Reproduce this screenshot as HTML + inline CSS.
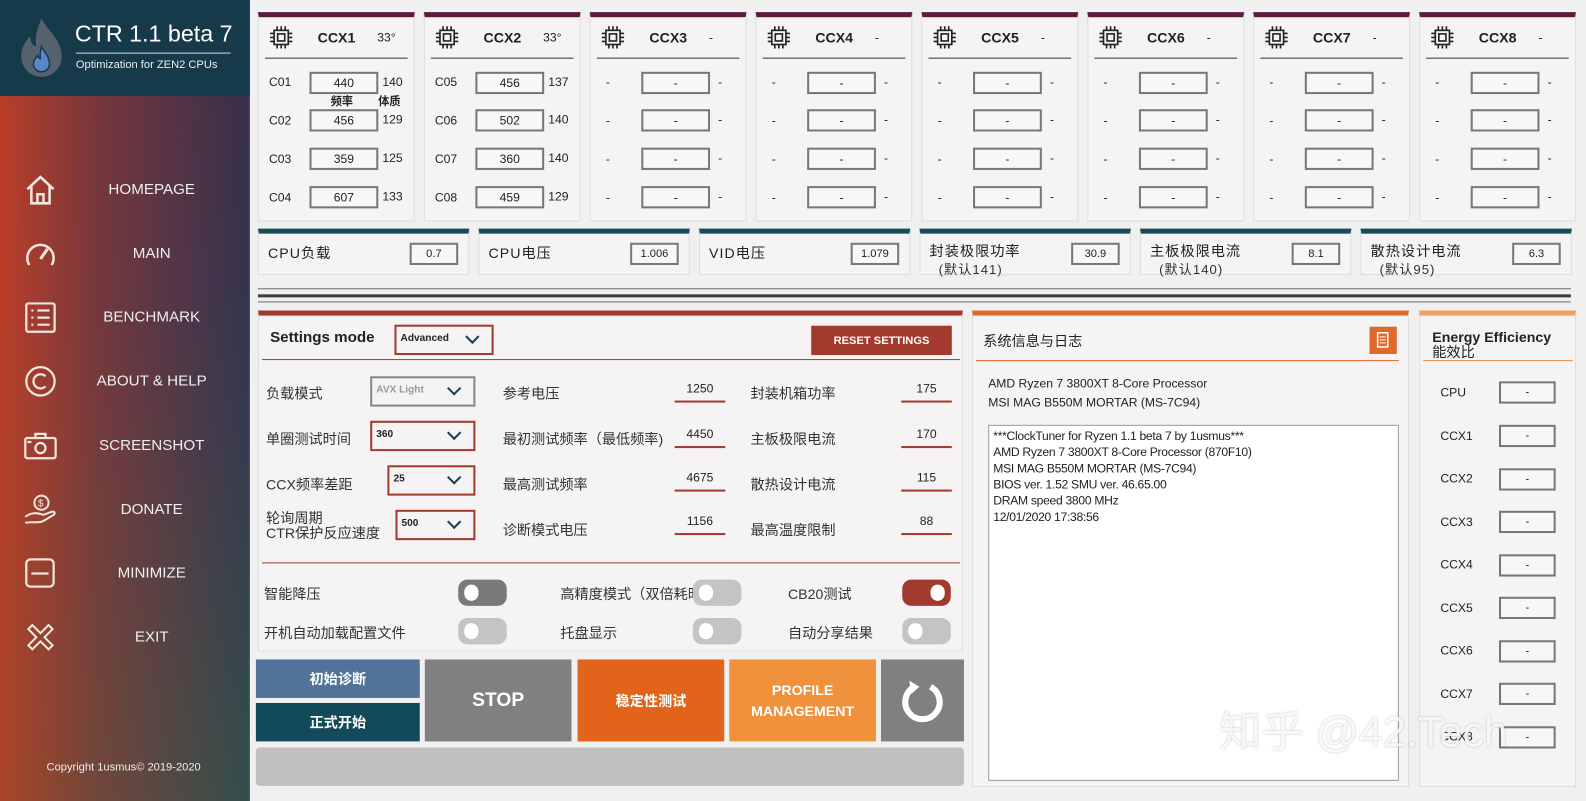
<!DOCTYPE html><html><head><meta charset="utf-8"><style>
*{box-sizing:border-box;margin:0;padding:0}
body{width:1586px;height:800px;position:relative;overflow:hidden;background:#f0f0f0;font-family:"Liberation Sans","Noto Sans CJK SC",sans-serif;color:#222}
#w{position:absolute;left:0;top:0;width:1568px;height:792px;transform:scale(1.01148);transform-origin:0 0}
.a{position:absolute}
#side{left:0;top:0;width:247px;height:792px;background:linear-gradient(90deg,rgba(186,62,40,1) 0%,rgba(150,58,52,.65) 40%,rgba(70,45,70,0) 100%),linear-gradient(180deg,#3a2c4a 0%,#2e3a52 60%,#1b4a58 100%);}
#side:after{content:"";position:absolute;left:0;top:0;right:0;bottom:0;background:linear-gradient(180deg,rgba(0,0,0,0) 40%,rgba(120,90,40,0.25) 100%)}
#hdr{left:0;top:0;width:247px;height:95px;background:#163a4a;z-index:2}
.nav{position:absolute;left:0;width:247px;height:40px;z-index:2;color:#eee;font-size:15px}
.nav span{position:absolute;left:100px;width:100px;text-align:center;top:12px}
.nav svg{position:absolute;left:23px;top:4px}
.p{position:absolute;background:#f5f3f4;border:1px solid #ddd}
.ccx{top:12px;width:155px;height:207px;border-top:5px solid #5b1a3e}
.ccx .t{position:absolute;left:58px;top:12px;font-weight:bold;font-size:14px}
.ccx .d{position:absolute;left:117px;top:13px;font-size:12px}
.ccx .hl{position:absolute;left:6px;right:6px;top:40px;border-top:1px solid #333}
.ccx .r{position:absolute;font-size:12px;width:20px;text-align:center}
.bx{position:absolute;border:2px solid #777;background:#f7f7f7;font-size:12px;text-align:center;line-height:18px;height:22px}
.ccx .bx{left:50px;width:68px}
.met{top:226px;width:209px;height:46px;border-top:5px solid #164e5a}
.met .l{position:absolute;left:9px;top:9px;font-size:14px;letter-spacing:1px}
.met .s{position:absolute;left:18px;top:25px;font-size:13px;color:#333;letter-spacing:1px}
.met .bx{right:10px;top:9px;width:48px;font-size:11px}
.lab{position:absolute;font-size:14px;color:#333}
.val{position:absolute;font-size:12px;width:50px;text-align:center;border-bottom:2px solid #a33a2e;height:21px}
.dd{position:absolute;border:2px solid #a33a2e;height:30px;font-size:10px;font-weight:bold;padding:6px 0 0 4px}
.dd:after{content:"";position:absolute;right:14px;top:5px;width:8px;height:8px;border-right:2px solid #183f50;border-bottom:2px solid #183f50;transform:rotate(45deg)}
.tg{position:absolute;width:48px;height:26px;border-radius:9px;background:#c4c4c4}
.tg:after{content:"";position:absolute;left:6px;top:5px;width:14px;height:16px;border-radius:7px;background:#fff}
.tg.on:after{left:28px}
.btn{position:absolute;color:#fff;font-weight:bold;text-align:center;display:flex;align-items:center;justify-content:center}
.ee{position:absolute;font-size:12px;left:20px}
.eb{position:absolute;left:78px;width:56px;height:22px;border:2px solid #777;background:#f7f7f7;font-size:11px;text-align:center;line-height:18px}
</style></head><body><div id="w">
<div id="side" class="a"></div>
<div id="hdr" class="a">
<svg class="a" style="left:16px;top:16px" width="50" height="62" viewBox="0 0 50 62"><path d="M25 2C30 14 45 22 45 40A20 20 0 0 1 5 40C5 30 10 24 14 20C14 28 18 30 20 30C18 20 22 10 25 2Z" fill="#56626e"/><path d="M25 30C28 36 33 40 33 47A8 8 0 0 1 17 47C17 43 20 41 21 39C22 42 24 42 24 42C23 38 24 34 25 30Z" fill="#5a86c7" stroke="#163a4a" stroke-width="1.5"/></svg>
<div class="a" style="left:74px;top:20px;font-size:23px;color:#fff">CTR 1.1 beta 7</div>
<div class="a" style="left:75px;top:52px;width:153px;border-top:1px solid #ddd"></div>
<div class="a" style="left:75px;top:58px;font-size:11px;color:#eee">Optimization for ZEN2 CPUs</div>
</div>
<div class="nav" style="top:167px"><svg width="34" height="34" viewBox="0 0 34 34" fill="none" stroke="#f3e6dc" stroke-width="2.5"><path d="M4 16L17 4L30 16M8 13V30H26V13M14 30V21H20V30"/></svg><span>HOMEPAGE</span></div>
<div class="nav" style="top:230px"><svg width="34" height="34" viewBox="0 0 34 34" fill="none" stroke="#f3e6dc" stroke-width="2.5"><path d="M6 28A13 13 0 1 1 28 28"/><path d="M17 22L24 12" stroke-width="3"/></svg><span>MAIN</span></div>
<div class="nav" style="top:293px"><svg width="34" height="34" viewBox="0 0 34 34" fill="none" stroke="#f3e6dc" stroke-width="2.2"><rect x="3" y="3" width="28" height="28" rx="2"/><path d="M8 10h2M14 10h12M8 17h2M14 17h12M8 24h2M14 24h12"/></svg><span>BENCHMARK</span></div>
<div class="nav" style="top:356px"><svg width="34" height="34" viewBox="0 0 34 34" fill="none" stroke="#f3e6dc" stroke-width="2.2"><circle cx="17" cy="17" r="14"/><path d="M22 12A7 7 0 1 0 22 22"/></svg><span style="left:90px;width:120px">ABOUT &amp; HELP</span></div>
<div class="nav" style="top:420px"><svg width="34" height="34" viewBox="0 0 34 34" fill="none" stroke="#f3e6dc" stroke-width="2.2"><rect x="2" y="9" width="30" height="20" rx="2"/><path d="M12 9V5H22V9M4 13h4"/><circle cx="17" cy="19" r="5"/></svg><span style="left:90px;width:120px">SCREENSHOT</span></div>
<div class="nav" style="top:483px"><svg width="34" height="34" viewBox="0 0 34 34" fill="none" stroke="#f3e6dc" stroke-width="2"><circle cx="18" cy="10" r="7"/><text x="14.5" y="14" font-size="10" fill="#f3e6dc" stroke="none" font-family="Liberation Sans">$</text><path d="M2 24C8 19 14 20 20 22L28 19C31 18 32 21 30 22L20 28C14 31 8 28 2 30"/></svg><span>DONATE</span></div>
<div class="nav" style="top:546px"><svg width="34" height="34" viewBox="0 0 34 34" fill="none" stroke="#f3e6dc" stroke-width="2.2"><rect x="3" y="3" width="27" height="27" rx="4"/><path d="M8 17H25"/></svg><span>MINIMIZE</span></div>
<div class="nav" style="top:609px"><svg width="34" height="34" viewBox="0 0 34 34" fill="none" stroke="#f3e6dc" stroke-width="2"><path d="M5 9L9 5L17 13L25 5L29 9L21 17L29 25L25 29L17 21L9 29L5 25L13 17Z"/></svg><span>EXIT</span></div>
<div class="a" style="left:46px;top:753px;font-size:11px;color:#eee;z-index:2">Copyright 1usmus© 2019-2020</div>

<svg width="0" height="0" class="a"><defs><g id="chip" fill="none" stroke="#222" stroke-width="1.6"><rect x="6" y="5" width="14" height="14"/><rect x="9.5" y="8.5" width="7" height="7"/><path d="M9 1v4M13 1v4M17 1v4M9 19v4M13 19v4M17 19v4M2 8h4M2 12h4M2 16h4M20 8h4M20 12h4M20 16h4"/></g></defs></svg>

<div class="p ccx" style="left:255px"><svg class="a" style="left:9px;top:8px" width="26" height="24"><use href="#chip"/></svg><div class="t">CCX1</div><div class="d">33°</div><div class="hl"></div>
<div class="r" style="left:7px;top:57px;width:28px">C01</div><div class="bx" style="top:54px">440</div><div class="r" style="left:121px;top:57px;width:22px">140</div>
<div class="r" style="left:62px;top:75px;width:40px;font-weight:bold;font-size:11px">频率</div><div class="r" style="left:112px;top:75px;width:34px;font-weight:bold;font-size:11px">体质</div>
<div class="r" style="left:7px;top:95px;width:28px">C02</div><div class="bx" style="top:91px">456</div><div class="r" style="left:121px;top:94px;width:22px">129</div>
<div class="r" style="left:7px;top:133px;width:28px">C03</div><div class="bx" style="top:129px">359</div><div class="r" style="left:121px;top:132px;width:22px">125</div>
<div class="r" style="left:7px;top:171px;width:28px">C04</div><div class="bx" style="top:167px">607</div><div class="r" style="left:121px;top:170px;width:22px">133</div></div>

<div class="p ccx" style="left:419px"><svg class="a" style="left:9px;top:8px" width="26" height="24"><use href="#chip"/></svg><div class="t">CCX2</div><div class="d">33°</div><div class="hl"></div>
<div class="r" style="left:7px;top:57px;width:28px">C05</div><div class="bx" style="top:54px">456</div><div class="r" style="left:121px;top:57px;width:22px">137</div>
<div class="r" style="left:7px;top:95px;width:28px">C06</div><div class="bx" style="top:91px">502</div><div class="r" style="left:121px;top:94px;width:22px">140</div>
<div class="r" style="left:7px;top:133px;width:28px">C07</div><div class="bx" style="top:129px">360</div><div class="r" style="left:121px;top:132px;width:22px">140</div>
<div class="r" style="left:7px;top:171px;width:28px">C08</div><div class="bx" style="top:167px">459</div><div class="r" style="left:121px;top:170px;width:22px">129</div></div>

<div class="p ccx" style="left:583px"><svg class="a" style="left:9px;top:8px" width="26" height="24"><use href="#chip"/></svg><div class="t">CCX3</div><div class="d">-</div><div class="hl"></div>
<div class="r" style="left:7px;top:57px">-</div><div class="bx" style="top:54px">-</div><div class="r" style="left:118px;top:57px">-</div>
<div class="r" style="left:7px;top:95px">-</div><div class="bx" style="top:91px">-</div><div class="r" style="left:118px;top:94px">-</div>
<div class="r" style="left:7px;top:133px">-</div><div class="bx" style="top:129px">-</div><div class="r" style="left:118px;top:132px">-</div>
<div class="r" style="left:7px;top:171px">-</div><div class="bx" style="top:167px">-</div><div class="r" style="left:118px;top:170px">-</div></div>

<div class="p ccx" style="left:747px"><svg class="a" style="left:9px;top:8px" width="26" height="24"><use href="#chip"/></svg><div class="t">CCX4</div><div class="d">-</div><div class="hl"></div>
<div class="r" style="left:7px;top:57px">-</div><div class="bx" style="top:54px">-</div><div class="r" style="left:118px;top:57px">-</div>
<div class="r" style="left:7px;top:95px">-</div><div class="bx" style="top:91px">-</div><div class="r" style="left:118px;top:94px">-</div>
<div class="r" style="left:7px;top:133px">-</div><div class="bx" style="top:129px">-</div><div class="r" style="left:118px;top:132px">-</div>
<div class="r" style="left:7px;top:171px">-</div><div class="bx" style="top:167px">-</div><div class="r" style="left:118px;top:170px">-</div></div>

<div class="p ccx" style="left:911px"><svg class="a" style="left:9px;top:8px" width="26" height="24"><use href="#chip"/></svg><div class="t">CCX5</div><div class="d">-</div><div class="hl"></div>
<div class="r" style="left:7px;top:57px">-</div><div class="bx" style="top:54px">-</div><div class="r" style="left:118px;top:57px">-</div>
<div class="r" style="left:7px;top:95px">-</div><div class="bx" style="top:91px">-</div><div class="r" style="left:118px;top:94px">-</div>
<div class="r" style="left:7px;top:133px">-</div><div class="bx" style="top:129px">-</div><div class="r" style="left:118px;top:132px">-</div>
<div class="r" style="left:7px;top:171px">-</div><div class="bx" style="top:167px">-</div><div class="r" style="left:118px;top:170px">-</div></div>

<div class="p ccx" style="left:1075px"><svg class="a" style="left:9px;top:8px" width="26" height="24"><use href="#chip"/></svg><div class="t">CCX6</div><div class="d">-</div><div class="hl"></div>
<div class="r" style="left:7px;top:57px">-</div><div class="bx" style="top:54px">-</div><div class="r" style="left:118px;top:57px">-</div>
<div class="r" style="left:7px;top:95px">-</div><div class="bx" style="top:91px">-</div><div class="r" style="left:118px;top:94px">-</div>
<div class="r" style="left:7px;top:133px">-</div><div class="bx" style="top:129px">-</div><div class="r" style="left:118px;top:132px">-</div>
<div class="r" style="left:7px;top:171px">-</div><div class="bx" style="top:167px">-</div><div class="r" style="left:118px;top:170px">-</div></div>

<div class="p ccx" style="left:1239px"><svg class="a" style="left:9px;top:8px" width="26" height="24"><use href="#chip"/></svg><div class="t">CCX7</div><div class="d">-</div><div class="hl"></div>
<div class="r" style="left:7px;top:57px">-</div><div class="bx" style="top:54px">-</div><div class="r" style="left:118px;top:57px">-</div>
<div class="r" style="left:7px;top:95px">-</div><div class="bx" style="top:91px">-</div><div class="r" style="left:118px;top:94px">-</div>
<div class="r" style="left:7px;top:133px">-</div><div class="bx" style="top:129px">-</div><div class="r" style="left:118px;top:132px">-</div>
<div class="r" style="left:7px;top:171px">-</div><div class="bx" style="top:167px">-</div><div class="r" style="left:118px;top:170px">-</div></div>

<div class="p ccx" style="left:1403px"><svg class="a" style="left:9px;top:8px" width="26" height="24"><use href="#chip"/></svg><div class="t">CCX8</div><div class="d">-</div><div class="hl"></div>
<div class="r" style="left:7px;top:57px">-</div><div class="bx" style="top:54px">-</div><div class="r" style="left:118px;top:57px">-</div>
<div class="r" style="left:7px;top:95px">-</div><div class="bx" style="top:91px">-</div><div class="r" style="left:118px;top:94px">-</div>
<div class="r" style="left:7px;top:133px">-</div><div class="bx" style="top:129px">-</div><div class="r" style="left:118px;top:132px">-</div>
<div class="r" style="left:7px;top:171px">-</div><div class="bx" style="top:167px">-</div><div class="r" style="left:118px;top:170px">-</div></div>

<div class="p met" style="left:255px"><div class="l">CPU负载</div><div class="bx">0.7</div></div>
<div class="p met" style="left:473px"><div class="l">CPU电压</div><div class="bx">1.006</div></div>
<div class="p met" style="left:691px"><div class="l">VID电压</div><div class="bx">1.079</div></div>
<div class="p met" style="left:909px"><div class="l" style="top:7px">封装极限功率</div><div class="s">(默认141)</div><div class="bx">30.9</div></div>
<div class="p met" style="left:1127px"><div class="l" style="top:7px">主板极限电流</div><div class="s">(默认140)</div><div class="bx">8.1</div></div>
<div class="p met" style="left:1345px"><div class="l" style="top:7px">散热设计电流</div><div class="s">(默认95)</div><div class="bx">6.3</div></div>

<div class="a" style="left:255px;top:285px;width:1298px;border-top:1px solid #666"></div>
<div class="a" style="left:255px;top:291px;width:1298px;border-top:3px solid #3c3c3c"></div>
<div class="a" style="left:255px;top:298px;width:1298px;border-top:1px solid #666"></div>

<div class="p" style="left:255px;top:307px;width:697px;height:337px;border-top:5px solid #a33a2e">
<div class="a" style="left:11px;top:13px;font-size:15px;font-weight:bold">Settings mode</div>
<div class="dd" style="left:134px;top:9px;width:98px;height:30px">Advanced</div>
<div class="btn" style="left:546px;top:10px;width:139px;height:29px;background:#a33a2e;font-size:11px">RESET SETTINGS</div>
<div class="a" style="left:3px;top:43px;width:690px;border-top:1px solid #a33a2e"></div>
<div class="lab" style="left:7px;top:67px">负载模式</div><div class="dd" style="left:110px;top:60px;width:104px;border-color:#888;color:#999">AVX Light</div>
<div class="lab" style="left:7px;top:112px">单圈测试时间</div><div class="dd" style="left:110px;top:104px;width:104px">360</div>
<div class="lab" style="left:7px;top:157px">CCX频率差距</div><div class="dd" style="left:127px;top:148px;width:87px">25</div>
<div class="lab" style="left:7px;top:193px;line-height:15px">轮询周期<br>CTR保护反应速度</div><div class="dd" style="left:135px;top:192px;width:79px">500</div>
<div class="lab" style="left:241px;top:67px">参考电压</div><div class="val" style="left:411px;top:65px">1250</div>
<div class="lab" style="left:241px;top:112px">最初测试频率（最低频率)</div><div class="val" style="left:411px;top:110px">4450</div>
<div class="lab" style="left:241px;top:157px">最高测试频率</div><div class="val" style="left:411px;top:153px">4675</div>
<div class="lab" style="left:241px;top:202px">诊断模式电压</div><div class="val" style="left:411px;top:196px">1156</div>
<div class="lab" style="left:486px;top:67px">封装机箱功率</div><div class="val" style="left:635px;top:65px">175</div>
<div class="lab" style="left:486px;top:112px">主板极限电流</div><div class="val" style="left:635px;top:110px">170</div>
<div class="lab" style="left:486px;top:157px">散热设计电流</div><div class="val" style="left:635px;top:153px">115</div>
<div class="lab" style="left:486px;top:202px">最高温度限制</div><div class="val" style="left:635px;top:196px">88</div>
<div class="a" style="left:3px;top:244px;width:690px;border-top:1px solid #a33a2e"></div>
<div class="lab" style="left:5px;top:265px">智能降压</div><div class="tg" style="left:197px;top:261px;background:#7a7a7a"></div>
<div class="lab" style="left:298px;top:265px">高精度模式（双倍耗时)</div><div class="tg" style="left:429px;top:261px"></div>
<div class="lab" style="left:523px;top:265px">CB20测试</div><div class="tg on" style="left:636px;top:261px;background:#a33a2e"></div>
<div class="lab" style="left:5px;top:304px">开机自动加载配置文件</div><div class="tg" style="left:197px;top:299px"></div>
<div class="lab" style="left:298px;top:304px">托盘显示</div><div class="tg" style="left:429px;top:299px"></div>
<div class="lab" style="left:523px;top:304px">自动分享结果</div><div class="tg" style="left:636px;top:299px"></div>
</div>

<div class="p" style="left:961px;top:307px;width:432px;height:471px;border-top:5px solid #e06a2a">
<div class="a" style="left:10px;top:15px;font-size:14px">系统信息与日志</div>
<div class="a" style="left:392px;top:11px;width:27px;height:27px;background:#e06a2a"><svg width="27" height="27"><rect x="8" y="6" width="10" height="14" fill="none" stroke="#fff" stroke-width="1.5"/><path d="M10 10h6M10 13h6M10 16h6" stroke="#fff"/></svg></div>
<div class="a" style="left:3px;top:44px;width:418px;border-top:1px solid #e06a2a"></div>
<div class="a" style="left:15px;top:58px;font-size:12px;line-height:19px">AMD Ryzen 7 3800XT 8-Core Processor<br>MSI MAG B550M MORTAR (MS-7C94)</div>
<div class="a" style="left:15px;top:108px;width:406px;height:352px;border:1px solid #999;background:#fff;font-size:12px;line-height:16px;padding:2px 4px;letter-spacing:-0.3px">***ClockTuner for Ryzen 1.1 beta 7 by 1usmus***<br>AMD Ryzen 7 3800XT 8-Core Processor (870F10)<br>MSI MAG B550M MORTAR (MS-7C94)<br>BIOS ver. 1.52 SMU ver. 46.65.00<br>DRAM speed 3800 MHz<br>12/01/2020 17:38:56</div>
</div>

<div class="p" style="left:1403px;top:307px;width:155px;height:471px;border-top:5px solid #f0a060">
<div class="a" style="left:12px;top:14px;font-size:14px;font-weight:bold;line-height:15px">Energy Efficiency<br><span style="font-weight:normal">能效比</span></div>
<div class="a" style="left:3px;top:44px;width:148px;border-top:1px solid #e09050"></div>
<div class="ee" style="top:69px">CPU</div><div class="eb" style="top:65px">-</div>
<div class="ee" style="top:112px">CCX1</div><div class="eb" style="top:108px">-</div>
<div class="ee" style="top:154px">CCX2</div><div class="eb" style="top:151px">-</div>
<div class="ee" style="top:197px">CCX3</div><div class="eb" style="top:193px">-</div>
<div class="ee" style="top:239px">CCX4</div><div class="eb" style="top:236px">-</div>
<div class="ee" style="top:282px">CCX5</div><div class="eb" style="top:278px">-</div>
<div class="ee" style="top:324px">CCX6</div><div class="eb" style="top:321px">-</div>
<div class="ee" style="top:367px">CCX7</div><div class="eb" style="top:363px">-</div>
<div class="ee" style="top:409px">CCX8</div><div class="eb" style="top:406px">-</div>
</div>

<div class="btn" style="left:253px;top:652px;width:162px;height:38px;background:#52729a;font-size:14px">初始诊断</div>
<div class="btn" style="left:253px;top:695px;width:162px;height:38px;background:#134a5a;font-size:14px">正式开始</div>
<div class="btn" style="left:420px;top:652px;width:145px;height:81px;background:#808080;font-size:19px">STOP</div>
<div class="btn" style="left:571px;top:652px;width:145px;height:81px;background:#e2641a;font-size:14px">稳定性测试</div>
<div class="btn" style="left:721px;top:652px;width:145px;height:81px;background:#f0913c;font-size:14px;line-height:21px">PROFILE<br>MANAGEMENT</div>
<div class="btn" style="left:871px;top:652px;width:82px;height:81px;background:#808080"><svg width="44" height="44" viewBox="0 0 44 44" fill="none" stroke="#fff" stroke-width="6"><path d="M14 8A17 17 0 1 0 30 8"/><path d="M9 2L19 8L11 15Z" fill="#fff" stroke="none"/></svg></div>
<div class="a" style="left:253px;top:739px;width:700px;height:38px;background:#bfbfbf;border-radius:4px"></div>

<div class="a" style="left:1205px;top:690px;font-size:42px;color:rgba(255,255,255,0.85);text-shadow:0 0 2px rgba(0,0,0,0.25)">知乎 @42.Tech</div>
</div></body></html>
